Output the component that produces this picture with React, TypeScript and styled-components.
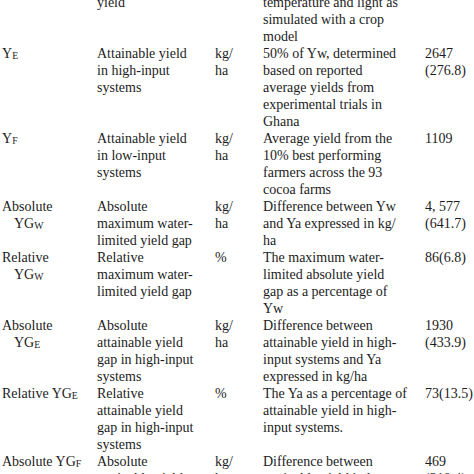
import React from "react";
import styled, { createGlobalStyle } from "styled-components";

type Entry = {
  label: React.ReactNode[];
  term: string[];
  unit: string[];
  desc: string[];
  value: string[];
};

const Sub = styled.sub`
  font-size: 0.7em;
  line-height: 0;
  vertical-align: -0.15em;
`;

const entries: Entry[] = [
  {
    label: [<>Y<Sub>W</Sub></>],
    term: ["Maximum", "water-limited", "yield"],
    unit: ["kg/", "ha"],
    desc: [
      "Yield limited by rainfall,",
      "radiation, CO2,",
      "temperature and light as",
      "simulated with a crop",
      "model",
    ],
    value: ["5314", "(618.2)"],
  },
  {
    label: [<>Y<Sub>E</Sub></>],
    term: ["Attainable yield", "in high-input", "systems"],
    unit: ["kg/", "ha"],
    desc: [
      "50% of Yw, determined",
      "based on reported",
      "average yields from",
      "experimental trials in",
      "Ghana",
    ],
    value: ["2647", "(276.8)"],
  },
  {
    label: [<>Y<Sub>F</Sub></>],
    term: ["Attainable yield", "in low-input", "systems"],
    unit: ["kg/", "ha"],
    desc: [
      "Average yield from the",
      "10% best performing",
      "farmers across the 93",
      "cocoa farms",
    ],
    value: ["1109"],
  },
  {
    label: ["Absolute", <>YG<Sub>W</Sub></>],
    term: ["Absolute", "maximum water-", "limited yield gap"],
    unit: ["kg/", "ha"],
    desc: ["Difference between Yw", "and Ya expressed in kg/", "ha"],
    value: ["4, 577", "(641.7)"],
  },
  {
    label: ["Relative", <>YG<Sub>W</Sub></>],
    term: ["Relative", "maximum water-", "limited yield gap"],
    unit: ["%"],
    desc: [
      "The maximum water-",
      "limited absolute yield",
      "gap as a percentage of",
      "Yw",
    ],
    value: ["86(6.8)"],
  },
  {
    label: ["Absolute", <>YG<Sub>E</Sub></>],
    term: ["Absolute", "attainable yield", "gap in high-input", "systems"],
    unit: ["kg/", "ha"],
    desc: [
      "Difference between",
      "attainable yield in high-",
      "input systems and Ya",
      "expressed in kg/ha",
    ],
    value: ["1930", "(433.9)"],
  },
  {
    label: [<>Relative YG<Sub>E</Sub></>],
    term: ["Relative", "attainable yield", "gap in high-input", "systems"],
    unit: ["%"],
    desc: [
      "The Ya as a percentage of",
      "attainable yield in high-",
      "input systems.",
    ],
    value: ["73(13.5)"],
  },
  {
    label: [<>Absolute YG<Sub>F</Sub></>],
    term: ["Absolute", "attainable yield", "gap in low-input", "systems"],
    unit: ["kg/", "ha"],
    desc: [
      "Difference between",
      "attainable yield in low-",
      "input systems and Ya",
    ],
    value: ["469", "(310.4)"],
  },
];

const GlobalStyle = createGlobalStyle`
  html, body {
    margin: 0;
    padding: 0;
    background: #ffffff;
    overflow: hidden;
  }

  body {
    font-family: "Liberation Serif", "Times New Roman", serif;
    color: #1c1c1c;
  }
`;

const Table = styled.div`
  display: grid;
  grid-template-columns: 95px 118px 48px 162px 1fr;
  margin-top: -40px;
  padding-left: 2px;
  font-size: 14px;
  line-height: 17px;
`;

const Row = styled.div`
  display: contents;
`;

const Cell = styled.div<{ $nowrap?: boolean }>`
  white-space: ${({ $nowrap }) => ($nowrap ? "nowrap" : "normal")};
`;

const Line = styled.span<{ $indent?: boolean }>`
  display: block;
  padding-left: ${({ $indent }) => ($indent ? "12px" : "0")};
`;

const App: React.FC = () => (
  <>
    <GlobalStyle />
    <Table>
      {entries.map((entry, i) => (
        <Row key={i}>
          <Cell $nowrap>
            {entry.label.map((part, j) => (
              <Line key={j} $indent={j > 0}>
                {part}
              </Line>
            ))}
          </Cell>
          <Cell>
            {entry.term.map((line) => (
              <Line key={line}>{line}</Line>
            ))}
          </Cell>
          <Cell>
            {entry.unit.map((line) => (
              <Line key={line}>{line}</Line>
            ))}
          </Cell>
          <Cell>
            {entry.desc.map((line) => (
              <Line key={line}>{line}</Line>
            ))}
          </Cell>
          <Cell $nowrap>
            {entry.value.map((line) => (
              <Line key={line}>{line}</Line>
            ))}
          </Cell>
        </Row>
      ))}
    </Table>
  </>
);

export default App;
